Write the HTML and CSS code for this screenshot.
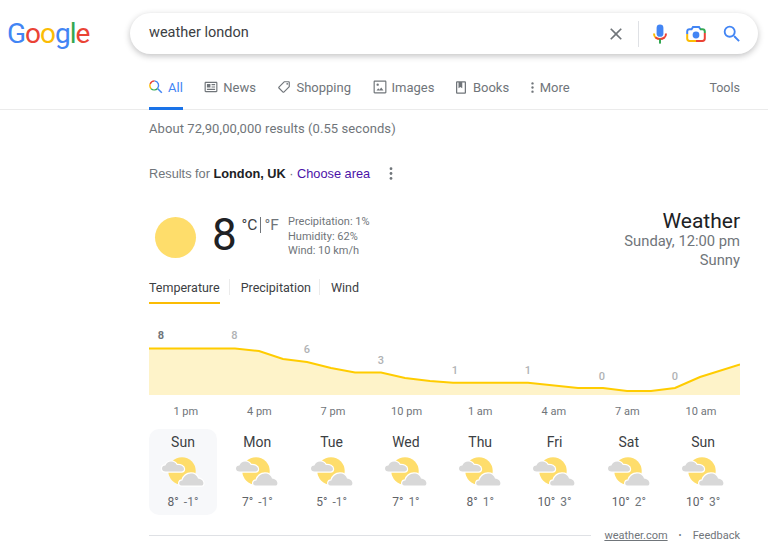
FILE: index.html
```html
<!DOCTYPE html>
<html lang="en">
<head>
<meta charset="utf-8">
<title>weather london - Google Search</title>
<link rel="stylesheet" href="styles.css">
</head>
<body>
<svg class="defs" width="0" height="0" aria-hidden="true">
  <symbol id="partly" viewBox="0 0 46 30">
    <circle cx="22" cy="14" r="13.7" fill="#fedd6b"/>
    <path class="cloud" d="M5.500 14.500C3.400 14.500 2 13.200 2 11.500 2 9.800 3.400 8.500 5.400 8.500 6.400 6.200 8.600 4.600 11.200 4.600 13.800 4.600 15.800 6 16.800 8 20.400 7.600 24 9.200 24 12 24 13.400 23 14.500 21.600 14.500Z"/>
    <path class="cloud" d="M21.500 28.500C19.800 28.500 19 27.200 19.200 25.800 19.400 24.400 20.600 23.400 22.400 23.400 23.600 19.400 27 16.500 31 16.500 34.600 16.500 37.200 18.600 38 21.500 40.800 21.700 43.400 23.600 43.400 26.200 43.400 27.600 42.600 28.500 41.400 28.500Z"/>
  </symbol>
</svg>

<header class="top">
  <div class="logo"><span class="b">G</span><span class="r">o</span><span class="y">o</span><span class="b">g</span><span class="g">l</span><span class="r">e</span></div>
  <div class="search">
    <span class="query">weather london</span>
    <svg class="ic-close" viewBox="0 0 24 24"><path d="M19 6.410L17.590 5 12 10.590 6.410 5 5 6.410 10.590 12 5 17.590 6.410 19 12 13.410 17.590 19 19 17.590 13.410 12z"/></svg>
    <span class="sep"></span>
    <svg class="ic-mic" viewBox="0 0 16 20">
      <rect x="4.600" y="0.400" width="6.800" height="12.400" rx="3.400" fill="#4285f4"/>
      <path d="M2 9.400C2 12.800 4.600 15 8 15" fill="none" stroke="#fbbc04" stroke-width="2"/>
      <path d="M14 9.400C14 12.800 11.400 15 8 15" fill="none" stroke="#ea4335" stroke-width="2"/>
      <path d="M3.400 13.200C4.600 14.400 6.200 15 8 15 9.800 15 11.400 14.400 12.600 13.200" fill="none" stroke="#ea4335" stroke-width="2"/>
      <rect x="7" y="15" width="2" height="4.600" fill="#34a853"/>
    </svg>
    <svg class="ic-cam" viewBox="0 0 20 18">
      <circle cx="10" cy="10" r="3.400" fill="#4285f4"/>
      <path d="M1.200 9V6.600C1.200 5.200 2.200 4.200 3.600 4.200H5.600L7 2H13L14.400 4.200" fill="none" stroke="#4285f4" stroke-width="2"/>
      <path d="M14 4.200H16.400C17.800 4.200 18.800 5.200 18.800 6.600V8" fill="none" stroke="#34a853" stroke-width="2"/>
      <path d="M18.800 8V13.600C18.800 15 17.800 16 16.400 16H10" fill="none" stroke="#ea4335" stroke-width="2"/>
      <path d="M10 16H3.600C2.200 16 1.200 15 1.200 13.600V9" fill="none" stroke="#fbbc04" stroke-width="2"/>
    </svg>
    <svg class="ic-search" viewBox="0 0 24 24"><path d="M15.500 14h-.79l-.28-.27A6.471 6.471 0 0 0 16 9.500 6.500 6.500 0 1 0 9.500 16c1.610 0 3.090-.59 4.230-1.570l.27.28v.79l5 4.990L20.490 19l-4.990-5zm-6 0C7.010 14 5 11.990 5 9.500S7.010 5 9.500 5 14 7.010 14 9.500 11.990 14 9.500 14z"/></svg>
  </div>
</header>

<nav class="tabs">
  <a class="tab active">
    <svg class="ti" viewBox="0 0 24 24">
      <path d="M14.600 14.600A8 8 0 0 0 9.500 1.500" fill="none" stroke="#4285f4" stroke-width="2.400"/>
      <path d="M9.500 1.500A8 8 0 0 0 2 7" fill="none" stroke="#ea4335" stroke-width="2.400"/>
      <path d="M2 7A8 8 0 0 0 3.600 15" fill="none" stroke="#fbbc04" stroke-width="2.400"/>
      <path d="M3.600 15A8 8 0 0 0 14.600 14.600" fill="none" stroke="#34a853" stroke-width="2.400"/>
      <path d="M15 15L22 22" stroke="#4285f4" stroke-width="2.600"/>
    </svg>All</a>
  <a class="tab">
    <svg class="ti" viewBox="0 0 24 24"><path d="M21 3H3C1.900 3 1 3.900 1 5v14c0 1.100.9 2 2 2h18c1.100 0 2-.9 2-2V5c0-1.100-.9-2-2-2zm0 16H3V5h18v14z"/><path d="M5 7h6v6H5zM13 7h6v2h-6zM13 11h6v2h-6zM5 15h14v2H5z"/></svg>News</a>
  <a class="tab">
    <svg class="ti flip" viewBox="0 0 24 24"><path d="M21.410 11.580l-9-9C12.050 2.220 11.550 2 11 2H4c-1.100 0-2 .9-2 2v7c0 .55.22 1.050.59 1.420l9 9c.36.36.86.58 1.410.58s1.050-.22 1.410-.59l7-7c.37-.36.59-.86.59-1.410s-.23-1.060-.59-1.420zM13 20.010L4 11V4h7v-.01l9 9-7 7.020z"/><circle cx="6.500" cy="6.500" r="1.500"/></svg>Shopping</a>
  <a class="tab">
    <svg class="ti" viewBox="0 0 24 24"><path d="M21 3v18H3V3h18m0-2H3C1.900 1 1 1.900 1 3v18c0 1.100.9 2 2 2h18c1.100 0 2-.9 2-2V3c0-1.100-.9-2-2-2z"/><path d="M14.100 12.900l-3 3.800L9 14.100 6 18h12z"/><circle cx="8" cy="8" r="2"/></svg>Images</a>
  <a class="tab">
    <svg class="ti-book" viewBox="0 0 16 20"><path d="M14 0H2C.9 0 0 .9 0 2v16c0 1.100.9 2 2 2h12c1.100 0 2-.9 2-2V2c0-1.100-.9-2-2-2zm0 18H2V2h2v9l3-2 3 2V2h4v16z"/></svg>Books</a>
  <a class="tab">
    <svg class="ti-dots" viewBox="0 0 4 16"><circle cx="2" cy="2" r="1.700"/><circle cx="2" cy="8" r="1.700"/><circle cx="2" cy="14" r="1.700"/></svg>More</a>
  <a class="tab tools">Tools</a>
</nav>

<main class="content">
  <p class="stats">About 72,90,00,000 results (0.55 seconds)</p>
  <div class="location">
    <span>Results for <b>London, UK</b> <i class="dot">·</i> <a class="choose">Choose area</a></span>
    <svg class="loc-dots" viewBox="0 0 4 16"><circle cx="2" cy="2" r="1.700"/><circle cx="2" cy="8" r="1.700"/><circle cx="2" cy="14" r="1.700"/></svg>
  </div>

  <section class="now">
    <div class="sun"></div>
    <div class="temp">8</div>
    <div class="units"><span class="c">°C</span><span class="f">°F</span></div>
    <div class="details">
      <div>Precipitation: 1%</div>
      <div>Humidity: 62%</div>
      <div>Wind: 10 km/h</div>
    </div>
    <div class="place">
      <div class="title">Weather</div>
      <div>Sunday, 12:00 pm</div>
      <div>Sunny</div>
    </div>
  </section>

  <div class="metric">
    <span class="m on">Temperature</span>
    <span class="m">Precipitation</span>
    <span class="m">Wind</span>
  </div>

  <svg class="chart" viewBox="0 0 591 75" width="591" height="75">
    <path class="area" d="M0 28.500H86L110 31 134 39 158 42 182 48 206 52.500H232L256 58 281 61 304 62.700H379L429 68H454L478 71H502L526 68 551 57 591 44.500V75H0Z"/>
    <path class="line" d="M0 28.500H86L110 31 134 39 158 42 182 48 206 52.500H232L256 58 281 61 304 62.700H379L429 68H454L478 71H502L526 68 551 57 591 44.500"/>
    <text class="lbl cur" x="12" y="19">8</text>
    <text class="lbl" x="85.500" y="19">8</text>
    <text class="lbl" x="158" y="33">6</text>
    <text class="lbl" x="232" y="44">3</text>
    <text class="lbl" x="306" y="54">1</text>
    <text class="lbl" x="379" y="54">1</text>
    <text class="lbl" x="453" y="60">0</text>
    <text class="lbl" x="526" y="60">0</text>
  </svg>

  <div class="hours">
    <span>1 pm</span><span>4 pm</span><span>7 pm</span><span>10 pm</span><span>1 am</span><span>4 am</span><span>7 am</span><span>10 am</span>
  </div>

  <div class="days">
    <div class="day sel"><div class="dn">Sun</div><svg class="wi"><use href="#partly"/></svg><div class="dt"><span>8°</span> <span class="lo">-1°</span></div></div>
    <div class="day"><div class="dn">Mon</div><svg class="wi"><use href="#partly"/></svg><div class="dt"><span>7°</span> <span class="lo">-1°</span></div></div>
    <div class="day"><div class="dn">Tue</div><svg class="wi"><use href="#partly"/></svg><div class="dt"><span>5°</span> <span class="lo">-1°</span></div></div>
    <div class="day"><div class="dn">Wed</div><svg class="wi"><use href="#partly"/></svg><div class="dt"><span>7°</span> <span class="lo">1°</span></div></div>
    <div class="day"><div class="dn">Thu</div><svg class="wi"><use href="#partly"/></svg><div class="dt"><span>8°</span> <span class="lo">1°</span></div></div>
    <div class="day"><div class="dn">Fri</div><svg class="wi"><use href="#partly"/></svg><div class="dt"><span>10°</span> <span class="lo">3°</span></div></div>
    <div class="day"><div class="dn">Sat</div><svg class="wi"><use href="#partly"/></svg><div class="dt"><span>10°</span> <span class="lo">2°</span></div></div>
    <div class="day"><div class="dn">Sun</div><svg class="wi"><use href="#partly"/></svg><div class="dt"><span>10°</span> <span class="lo">3°</span></div></div>
  </div>

  <footer class="foot">
    <span class="rule"></span>
    <a class="src">weather.com</a>
    <span class="bullet">•</span>
    <a class="fb">Feedback</a>
  </footer>
</main>
</body>
</html>
```
FILE: styles.css
```css
* { box-sizing: border-box; }
html, body { margin: 0; padding: 0; }
body {
  width: 768px;
  height: 549px;
  overflow: hidden;
  background: #fff;
  font-family: Roboto, "Liberation Sans", sans-serif;
  color: #70757a;
}
.defs { position: absolute; }
.cloud { fill: #d8d8d8; stroke: #fff; stroke-width: 2.400; paint-order: stroke; }

/* header */
.top { display: flex; align-items: flex-start; padding-top: 13px; height: 67px; }
.logo {
  width: 130px;
  padding-left: 7px;
  font-size: 28px;
  line-height: 41px;
  letter-spacing: -1px;
}
.b { color: #4285f4; }
.r { color: #ea4335; }
.y { color: #fbbc05; }
.g { color: #34a853; }
.search {
  width: 628px;
  height: 41px;
  border-radius: 21px;
  display: flex;
  align-items: center;
  padding-left: 19px;
  background: #fff;
  box-shadow: 0 2px 6px rgba(32, 33, 36, .28);
}
.query { flex: 1; font-size: 14.500px; color: #3c4043; margin-top: -3px; }
.ic-close { width: 20px; height: 20px; fill: #70757a; margin-right: 12px; }
.sep { width: 1px; height: 26px; background: #dfe1e5; margin-right: 13px; }
.ic-mic { width: 16px; height: 20px; margin-right: 18px; }
.ic-cam { width: 20px; height: 18px; margin-right: 15.500px; }
.ic-search { width: 22px; height: 22px; fill: #4285f4; margin-right: 15px; }

/* tabs */
.tabs {
  display: flex;
  height: 43px;
  padding: 0 28px 0 149px;
  border-bottom: 1px solid #ebebeb;
}
.tab {
  display: flex;
  align-items: center;
  height: 43px;
  margin-right: 21.500px;
  padding-bottom: 3px;
  font-size: 13px;
  color: #70757a;
}
.tab.active { color: #4285f4; border-bottom: 3px solid #1a73e8; padding-bottom: 0; margin-bottom: -1px; }
.ti { width: 14px; height: 14px; fill: #70757a; margin-right: 5px; }
.flip { transform: scaleX(-1); }
.ti-book { width: 10px; height: 13px; fill: #70757a; margin-right: 7px; }
.ti-dots { width: 3px; height: 11px; fill: #70757a; margin-right: 6px; }
.tools { margin: 0 0 0 auto; font-size: 12.500px; }

/* content */
.content { width: 591px; margin-left: 149px; }
.stats { margin: 0; padding-top: 11px; height: 37px; font-size: 13px; line-height: 16px; letter-spacing: .08px; }
.location {
  display: flex;
  align-items: center;
  gap: 19px;
  height: 20px;
  margin-top: 16px;
  font-family: "Liberation Sans", Arial, sans-serif;
  font-size: 12.750px;
  color: #70757a;
}
.location b { color: #202124; font-weight: 700; }
.dot { font-style: normal; }
.choose { color: #4b11a8; }
.loc-dots { width: 4px; height: 13px; fill: #70757a; }

.now { display: flex; align-items: flex-start; height: 84px; margin-top: 17px; }
.sun { width: 41px; height: 41px; border-radius: 50%; background: #fedd6b; margin: 17px 0 0 6px; }
.temp { font-size: 44px; line-height: 50px; color: #202124; margin: 10px 0 0 16px; width: 28px; }
.units { display: flex; align-items: center; font-size: 15.500px; line-height: 16px; margin: 17px 0 0 1.500px; width: 45.500px; }
.c { color: #3c4043; padding-right: 3px; border-right: 1px solid #70757a; }
.f { padding-left: 3px; }
.details { font-size: 11px; line-height: 14.500px; margin-top: 15px; margin-left: 1px; }
.place { margin-left: auto; text-align: right; font-size: 14.750px; line-height: 19px; margin-top: 9px; }
.title { font-size: 21px; line-height: 24px; color: #202124; margin-bottom: -1px; }

.metric { display: flex; height: 26px; margin-top: -6px; font-size: 12.500px; }
.m { line-height: 20px; color: #3c4043; height: 26px; margin-right: 8px; }
.m.on { margin-right: 9px; }
.m + .m { padding-left: 12px; background: linear-gradient(#ebebeb, #ebebeb) no-repeat 0 1px / 1px 16px; }
.m.on { border-bottom: 2px solid #fbbc04; }

.chart { display: block; margin-top: 16px; }
.area { fill: #fef3c9; }
.line { fill: none; stroke: #ffcc00; stroke-width: 2; }
.lbl { font-size: 11px; font-weight: 500; fill: #b0b2b4; text-anchor: middle; font-family: Roboto, sans-serif; }
.lbl.cur { fill: #70757a; font-weight: 700; }

.hours { display: grid; grid-template-columns: repeat(8, 73.600px); height: 34px; padding-bottom: 2px; align-items: center; font-size: 11px; color: #70757a; text-align: center; }

.days { display: grid; grid-template-columns: repeat(8, 68px); column-gap: 6.300px; }
.day { height: 86px; border-radius: 10px; text-align: center; padding-top: 5px; }
.sel { background: #f7f8fa; }
.dn { font-size: 14px; line-height: 17px; color: #3c4043; }
.wi { display: block; width: 46px; height: 30px; margin: 6px 0 0 11px; }
.dt { font-size: 12px; line-height: 14px; margin-top: 8px; color: #5f6368; }
.lo { color: #70757a; margin-left: 2px; }

.foot { display: flex; align-items: center; height: 14px; margin-top: 13px; font-size: 11px; }
.rule { width: 443px; height: 1px; background: #dfe1e5; margin-right: 13px; }
.src { text-decoration: underline; color: #70757a; }
.bullet { margin: 0 11px; font-size: 9px; }
.fb { color: #70757a; }
```
